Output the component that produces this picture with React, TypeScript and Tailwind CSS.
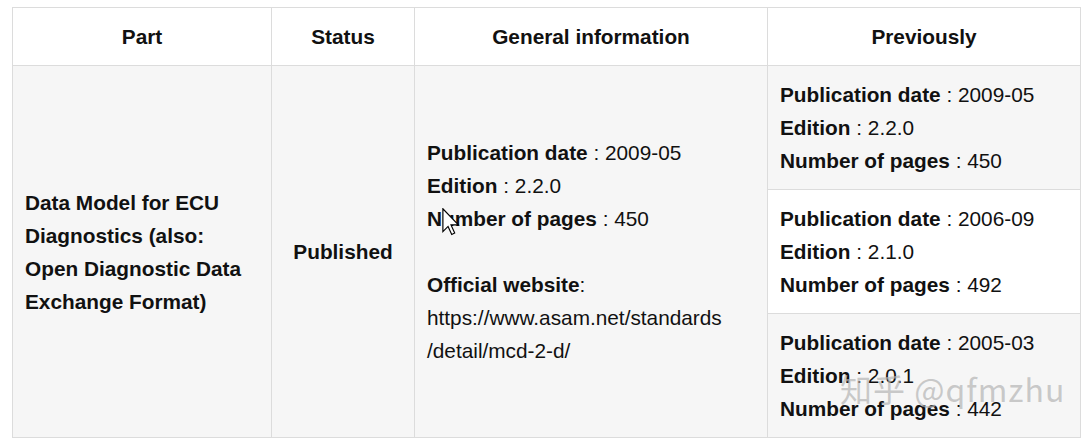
import React from 'react';

const font = { fontFamily: '"Liberation Sans", Arial, sans-serif' };

type Edition = { date: string; edition: string; pages: string };

const previous: Edition[] = [
  { date: '2009-05', edition: '2.2.0', pages: '450' },
  { date: '2006-09', edition: '2.1.0', pages: '492' },
  { date: '2005-03', edition: '2.0.1', pages: '442' },
];

function Info({ e }: { e: Edition }) {
  return (
    <>
      <div>
        <b>Publication date</b> : {e.date}
      </div>
      <div>
        <b>Edition</b> : {e.edition}
      </div>
      <div>
        <b>Number of pages</b> : {e.pages}
      </div>
    </>
  );
}

const th = 'border border-[#dcdcdc] bg-white h-[58px] text-center font-bold align-middle';
const td = 'border border-[#dcdcdc] px-[12px] align-middle';

export default function App() {
  return (
    <div className="relative bg-white w-[1089px] h-[441px] pl-[12px] pt-[7px] text-[20.8px] leading-[33px] text-[#111]" style={font}>
      <table className="table-fixed border-collapse w-[1068px]">
        <colgroup>
          <col className="w-[259px]" />
          <col className="w-[143px]" />
          <col className="w-[353px]" />
          <col className="w-[313px]" />
        </colgroup>
        <thead>
          <tr>
            <th className={th}>Part</th>
            <th className={th}>Status</th>
            <th className={th}>General information</th>
            <th className={th}>Previously</th>
          </tr>
        </thead>
        <tbody>
          <tr>
            <td rowSpan={3} className={`${td} bg-[#f6f6f6] font-bold`}>
              Data Model for ECU
              <br />
              Diagnostics (also:
              <br />
              Open Diagnostic Data
              <br />
              Exchange Format)
            </td>
            <td rowSpan={3} className={`${td} bg-[#f6f6f6] font-bold text-center`}>
              Published
            </td>
            <td rowSpan={3} className={`${td} bg-[#f6f6f6]`}>
              <Info e={previous[0]} />
              <div>&nbsp;</div>
              <div>
                <b>Official website</b>:
              </div>
              <div>
                https://www.asam.net/standards<wbr />/detail/mcd-2-d/
              </div>
            </td>
            <td className={`${td} bg-[#f6f6f6] h-[124px]`}>
              <Info e={previous[0]} />
            </td>
          </tr>
          <tr>
            <td className={`${td} bg-white h-[124px]`}>
              <Info e={previous[1]} />
            </td>
          </tr>
          <tr>
            <td className={`${td} bg-[#f6f6f6] h-[124px]`}>
              <Info e={previous[2]} />
            </td>
          </tr>
        </tbody>
      </table>

      {/* watermark */}
      <div
        className="absolute left-[840px] top-[369px] text-[32px] leading-[38px] tracking-[1px] text-[#b4b4b4]/70 whitespace-nowrap"
        style={{ fontFamily: '"Noto Sans CJK SC", "Liberation Sans", sans-serif' }}
      >
        知乎 @qfmzhu
      </div>

      {/* mouse cursor */}
      <svg className="absolute left-[442px] top-[208px]" width="18" height="28" viewBox="0 0 12 19">
        <path d="M0.5 0.5 L0.5 16 L4 12.5 L6.5 18 L8.5 17 L6 11.5 L11 11.5 Z" fill="#fff" stroke="#000" strokeWidth="0.8" strokeLinejoin="miter" />
      </svg>
    </div>
  );
}
